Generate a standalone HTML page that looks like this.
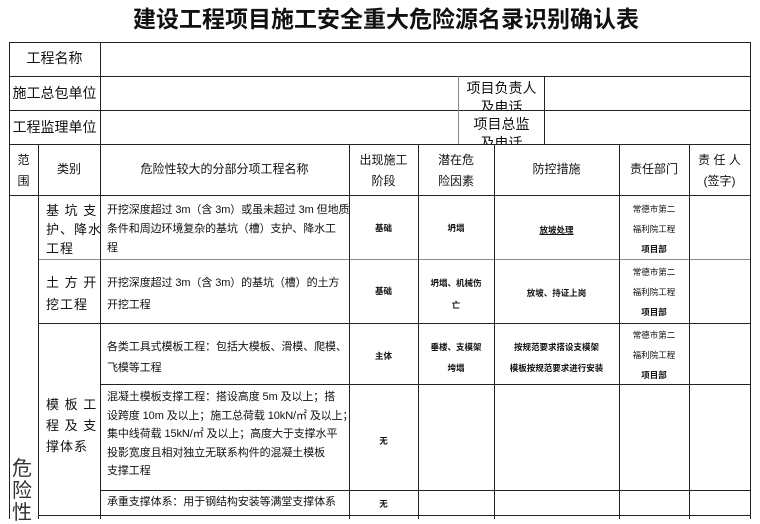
<!DOCTYPE html>
<html><head><meta charset="utf-8"><style>
body{margin:0;width:760px;height:519px;background:#fff;overflow:hidden;position:relative;font-family:"Liberation Sans","Noto Sans CJK SC",sans-serif;color:#111}
.h{position:absolute;height:1px;background:#222}
.v{position:absolute;width:1px;background:#222}
.t{position:absolute;font-size:13px;line-height:19px;white-space:nowrap}
.n{font-size:11px!important;letter-spacing:-0.1px}
.c{text-align:center}
.s{position:absolute;font-size:8.5px;font-weight:bold;line-height:19px;text-align:center;white-space:nowrap}
</style></head><body>
<div class="t c" style="left:0;width:772px;top:4px;font-size:23px;line-height:30px;font-weight:bold">建设工程项目施工安全重大危险源名录识别确认表</div>
<div class="h" style="left:9px;width:742px;top:42px"></div>
<div class="h" style="left:9px;width:742px;top:76px"></div>
<div class="h" style="left:9px;width:742px;top:110px"></div>
<div class="h" style="left:9px;width:742px;top:144px"></div>
<div class="h" style="left:9px;width:742px;top:195px"></div>
<div class="h" style="left:38px;width:713px;top:259px;background:#888"></div>
<div class="h" style="left:38px;width:713px;top:323px"></div>
<div class="h" style="left:100px;width:651px;top:384px"></div>
<div class="h" style="left:100px;width:651px;top:490px"></div>
<div class="h" style="left:38px;width:713px;top:515px"></div>
<div class="v" style="left:9px;top:42px;height:477px"></div>
<div class="v" style="left:750px;top:42px;height:477px"></div>
<div class="v" style="left:100px;top:42px;height:102px"></div>
<div class="v" style="left:458px;top:76px;height:68px;background:#888"></div>
<div class="v" style="left:544px;top:76px;height:68px"></div>
<div class="v" style="left:38px;top:144px;height:375px"></div>
<div class="v" style="left:100px;top:144px;height:375px"></div>
<div class="v" style="left:349px;top:144px;height:375px"></div>
<div class="v" style="left:418px;top:144px;height:375px"></div>
<div class="v" style="left:494px;top:144px;height:375px"></div>
<div class="v" style="left:619px;top:144px;height:375px"></div>
<div class="v" style="left:689px;top:144px;height:375px"></div>
<div class="t c" style="left:9px;width:91px;top:49px;font-size:14px">工程名称</div>
<div class="t c" style="left:9px;width:91px;top:84px;font-size:14px">施工总包单位</div>
<div class="t c" style="left:9px;width:91px;top:118px;font-size:14px">工程监理单位</div>
<div style="position:absolute;left:459px;top:77px;width:85px;height:33px;overflow:hidden"><div class="t c" style="width:85px;top:2px;font-size:14px">项目负责人<br>及电话</div></div>
<div style="position:absolute;left:459px;top:111px;width:85px;height:33px;overflow:hidden"><div class="t c" style="width:85px;top:4px;font-size:14px">项目总监<br>及电话</div></div>
<div class="t c" style="left:9px;width:29px;top:150px;line-height:21px;font-size:12px">范<br>围</div>
<div class="t c" style="left:38px;width:62px;top:160px;font-size:12px">类别</div>
<div class="t c" style="left:100px;width:249px;top:160px;font-size:12px">危险性较大的分部分项工程名称</div>
<div class="t c" style="left:349px;width:69px;top:150px;line-height:21px;font-size:12px">出现施工<br>阶段</div>
<div class="t c" style="left:418px;width:76px;top:150px;line-height:21px;font-size:12px">潜在危<br>险因素</div>
<div class="t c" style="left:494px;width:125px;top:160px;font-size:12px">防控措施</div>
<div class="t c" style="left:619px;width:70px;top:160px;font-size:12px">责任部门</div>
<div class="t c" style="left:689px;width:61px;top:150px;line-height:21px;font-size:12px">责 任 人<br>(签字)</div>
<div class="t" style="left:46px;top:201px;letter-spacing:1px">基 坑 支<br>护、降水<br>工程</div>
<div class="t n" style="left:107px;top:201px">开挖深度超过 3m（含 3m）或虽未超过 3m 但地质<br>条件和周边环境复杂的基坑（槽）支护、降水工<br>程</div>
<div class="s" style="left:349px;width:69px;top:219px">基础</div>
<div class="s" style="left:418px;width:76px;top:219px">坍塌</div>
<div class="s" style="left:494px;width:125px;top:221px;text-decoration:underline">放坡处理</div>
<div class="s" style="left:619px;width:70px;top:199px;line-height:20px;font-weight:normal">常德市第二<br>福利院工程<br><b>项目部</b></div>
<div class="t" style="left:46px;top:272px;line-height:22px;letter-spacing:1px">土 方 开<br>挖工程</div>
<div class="t n" style="left:107px;top:272px;line-height:22px">开挖深度超过 3m（含 3m）的基坑（槽）的土方<br>开挖工程</div>
<div class="s" style="left:349px;width:69px;top:282px">基础</div>
<div class="s" style="left:418px;width:76px;top:272px;line-height:22px">坍塌、机械伤<br>亡</div>
<div class="s" style="left:494px;width:125px;top:284px">放坡、持证上岗</div>
<div class="s" style="left:619px;width:70px;top:262px;line-height:20px;font-weight:normal">常德市第二<br>福利院工程<br><b>项目部</b></div>
<div class="t n" style="left:107px;top:337px;line-height:21px">各类工具式模板工程：包括大模板、滑模、爬模、<br>飞模等工程</div>
<div class="s" style="left:349px;width:69px;top:347px">主体</div>
<div class="s" style="left:418px;width:76px;top:337px;line-height:21px">垂楼、支模架<br>垮塌</div>
<div class="s" style="left:494px;width:125px;top:337px;line-height:21px">按规范要求搭设支模架<br>模板按规范要求进行安装</div>
<div class="s" style="left:619px;width:70px;top:325px;line-height:20px;font-weight:normal">常德市第二<br>福利院工程<br><b>项目部</b></div>
<div class="t" style="left:46px;top:394px;line-height:21px;letter-spacing:1px">模 板 工<br>程 及 支<br>撑体系</div>
<div class="t n" style="left:107px;top:388px;line-height:18.5px">混凝土模板支撑工程：搭设高度 5m 及以上；搭<br>设跨度 10m 及以上；施工总荷载 10kN/㎡ 及以上；<br>集中线荷载 15kN/㎡ 及以上；高度大于支撑水平<br>投影宽度且相对独立无联系构件的混凝土模板<br>支撑工程</div>
<div class="s" style="left:349px;width:69px;top:432px">无</div>
<div class="t n" style="left:107px;top:493px">承重支撑体系：用于钢结构安装等满堂支撑体系</div>
<div class="s" style="left:349px;width:69px;top:495px">无</div>
<div class="t" style="left:12px;top:458px;font-size:20px;line-height:22px;color:#333">危<br>险<br>性</div>
</body></html>
